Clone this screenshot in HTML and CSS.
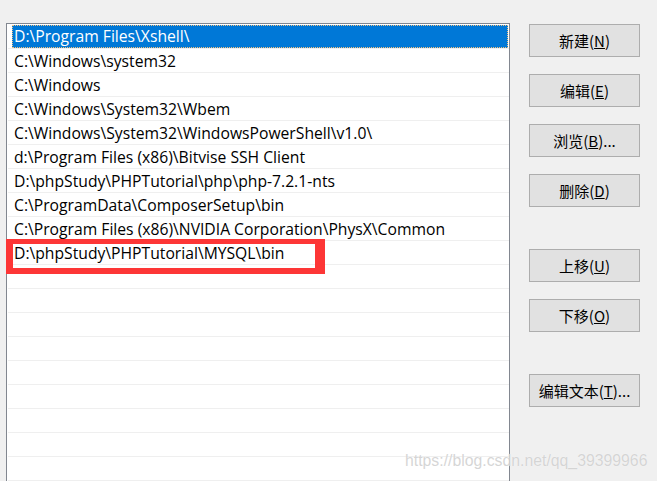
FILE: index.html
```html
<!DOCTYPE html>
<html lang="zh-CN">
<head>
<meta charset="utf-8">
<title>编辑环境变量</title>
<link rel="stylesheet" href="styles.css">
</head>
<body>
<div class="dialog">
  <div class="list">
    <div class="row"><div class="cell selected">D:\Program Files\Xshell\</div></div>
    <div class="row"><div class="cell">C:\Windows\system32</div></div>
    <div class="row"><div class="cell">C:\Windows</div></div>
    <div class="row"><div class="cell">C:\Windows\System32\Wbem</div></div>
    <div class="row"><div class="cell">C:\Windows\System32\WindowsPowerShell\v1.0\</div></div>
    <div class="row"><div class="cell">d:\Program Files (x86)\Bitvise SSH Client</div></div>
    <div class="row"><div class="cell">D:\phpStudy\PHPTutorial\php\php-7.2.1-nts</div></div>
    <div class="row"><div class="cell">C:\ProgramData\ComposerSetup\bin</div></div>
    <div class="row"><div class="cell">C:\Program Files (x86)\NVIDIA Corporation\PhysX\Common</div></div>
    <div class="row"><div class="cell">D:\phpStudy\PHPTutorial\MYSQL\bin</div></div>
    <div class="row"><div class="cell"></div></div>
    <div class="row"><div class="cell"></div></div>
    <div class="row"><div class="cell"></div></div>
    <div class="row"><div class="cell"></div></div>
    <div class="row"><div class="cell"></div></div>
    <div class="row"><div class="cell"></div></div>
    <div class="row"><div class="cell"></div></div>
    <div class="row"><div class="cell"></div></div>
    <div class="row"><div class="cell"></div></div>
    <div class="row"><div class="cell"></div></div>
  </div>
  <div class="buttons">
    <button class="btn">新建(<u>N</u>)</button>
    <button class="btn">编辑(<u>E</u>)</button>
    <button class="btn">浏览(<u>B</u>)...</button>
    <button class="btn">删除(<u>D</u>)</button>
    <button class="btn group">上移(<u>U</u>)</button>
    <button class="btn">下移(<u>O</u>)</button>
    <button class="btn group">编辑文本(<u>T</u>)...</button>
  </div>
</div>
<div class="highlight"></div>
<div class="watermark">https://blog.csdn.net/qq_39399966</div>
</body>
</html>
```
FILE: styles.css
```css
html, body {
  margin: 0;
  padding: 0;
  background: #f0f0f0;
  width: 657px;
  height: 481px;
  overflow: hidden;
}
body {
  position: relative;
  font-family: "Open Sans", "Noto Sans", "Noto Sans CJK SC", sans-serif;
}
.dialog {
  display: flex;
  align-items: flex-start;
  padding: 23px 0 0 6px;
}
.list {
  width: 502px;
  height: 480px;
  border: 1px solid #828790;
  background: #ffffff;
  flex: none;
}
.row {
  box-sizing: border-box;
  height: 24px;
  margin-left: 1px;
  border-top: 1px solid #efefef;
}
.row:first-child {
  border-top-color: #ffffff;
}
.cell {
  box-sizing: border-box;
  height: 23px;
  margin: 0 1px 0 4px;
  padding-left: 2px;
  font-size: 15.7px;
  line-height: 25px;
  color: #000000;
  white-space: nowrap;
  overflow: visible;
}
.cell.selected {
  background: #0078d7;
  color: #ffffff;
  line-height: 23px;
  outline: 1px dotted #f0c080;
  outline-offset: -1px;
}
.buttons {
  display: flex;
  flex-direction: column;
  gap: 17px;
  margin-left: 19px;
  margin-top: 1px;
}
.btn {
  width: 111px;
  height: 33px;
  box-sizing: border-box;
  background: #e1e1e1;
  border: 1px solid #adadad;
  border-radius: 0;
  padding: 0;
  font-family: "Noto Sans CJK SC", sans-serif;
  font-size: 15px;
  color: #000000;
}
.btn.group {
  margin-top: 25px;
}
.highlight {
  position: absolute;
  left: 6px;
  top: 239px;
  width: 319px;
  height: 35px;
  box-sizing: border-box;
  border-style: solid;
  border-color: #fd3636;
  border-width: 5px 10px 6px 7px;
}
.watermark {
  position: absolute;
  left: 405px;
  top: 452px;
  font-family: "Liberation Sans", Arial, sans-serif;
  font-size: 15.8px;
  color: rgba(200, 200, 200, 0.75);
  text-shadow: 0 0 1px rgba(255, 255, 255, 0.9);
  white-space: nowrap;
}
```
